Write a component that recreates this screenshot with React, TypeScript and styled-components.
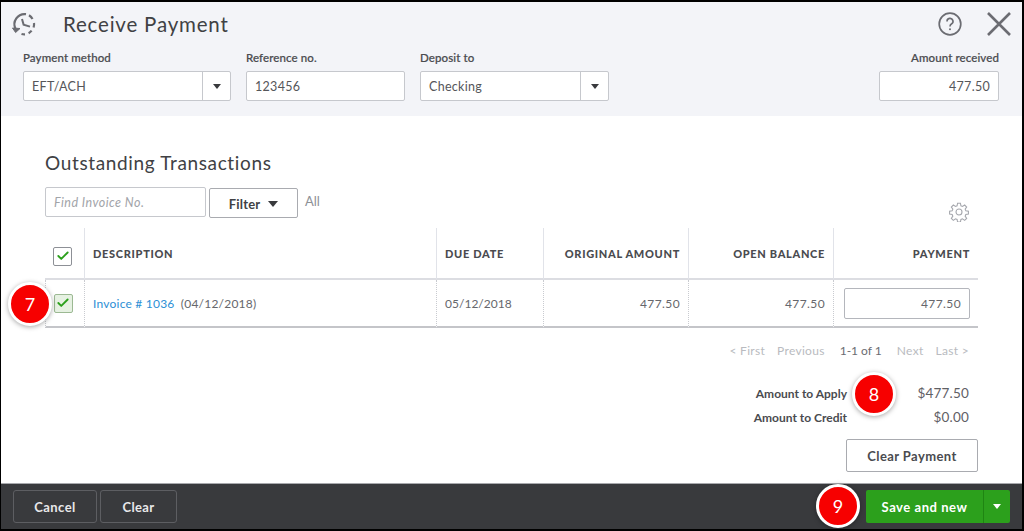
import React from "react"
import styled, { createGlobalStyle } from "styled-components"
import { Check } from "lucide-react"

const GlobalStyle = createGlobalStyle`
  html, body {
    margin: 0;
    padding: 0;
    background: #000;
  }
  * {
    box-sizing: border-box;
  }
`

const Frame = styled.div`
  position: relative;
  width: 1024px;
  height: 531px;
  padding: 2px 2px 2px 1px;
  background: #000;
  font-family: "Lato", "Liberation Sans", sans-serif;
  color: #393a3d;
  display: flex;
  flex-direction: column;
  overflow: hidden;
`

const Header = styled.header`
  height: 114px;
  background: #f3f4f8;
  padding: 8px 11px 0 10px;
  flex: none;
`

const TitleRow = styled.div`
  display: flex;
  align-items: center;
  height: 28px;
`

const Title = styled.h1`
  margin: 0 0 0 26px;
  font-size: 20.5px;
  font-weight: 400;
  letter-spacing: 0.8px;
  color: #404144;
  flex: 1;
`

const IconButton = styled.span<{ $gap: number }>`
  display: flex;
  margin-left: ${(p) => p.$gap}px;
`

const Fields = styled.div`
  display: flex;
  margin: 13px 0 0 12px;
`

const Field = styled.div<{ $width: number; $gap?: number; $right?: boolean }>`
  width: ${(p) => p.$width}px;
  margin-left: ${(p) => (p.$right ? "auto" : "0")};
  margin-right: ${(p) => (p.$right ? "12px" : `${p.$gap ?? 0}px`)};
  text-align: ${(p) => (p.$right ? "right" : "left")};
`

const Label = styled.div`
  font-size: 11.5px;
  line-height: 14px;
  height: 14px;
  color: #4a4b4f;
  margin-bottom: 6px;
  font-weight: 500;
  letter-spacing: 0.1px;
  -webkit-text-stroke: 0.2px #4a4b4f;
`

const InputBox = styled.div<{ $right?: boolean }>`
  height: 30px;
  background: #fff;
  border: 1px solid #c6c8cd;
  border-radius: 2px;
  display: flex;
  align-items: center;
  justify-content: ${(p) => (p.$right ? "flex-end" : "flex-start")};
  font-size: 12.5px;
  letter-spacing: 0.3px;
  color: #55565a;
  padding: 1px 8px 0;
`

const SelectBox = styled(InputBox)`
  padding: 0;
`

const SelectValue = styled.span`
  flex: 1;
  padding: 1px 0 0 8px;
`

const SelectArrow = styled.span`
  width: 28px;
  height: 100%;
  border-left: 1px solid #c6c8cd;
  display: flex;
  align-items: center;
  justify-content: center;
`

const Caret = styled.i<{ $color?: string; $large?: boolean }>`
  display: block;
  width: 0;
  height: 0;
  border-left: ${(p) => (p.$large ? 5.5 : 4.5)}px solid transparent;
  border-right: ${(p) => (p.$large ? 5.5 : 4.5)}px solid transparent;
  border-top: ${(p) => (p.$large ? 6 : 5)}px solid ${(p) => p.$color ?? "#393a3d"};
`

const Body = styled.main`
  flex: 1;
  background: #fff;
  padding: 34px 44px 0 44px;
`

const SectionTitle = styled.h2`
  margin: 0;
  font-size: 19px;
  line-height: 26px;
  font-weight: 400;
  letter-spacing: 0.64px;
  color: #404144;
`

const Toolbar = styled.div`
  display: flex;
  align-items: flex-start;
  margin-top: 11px;
  height: 41px;
`

const FindInput = styled.div`
  width: 161px;
  height: 30px;
  border: 1px solid #c6c8cd;
  border-radius: 2px;
  font-size: 12.5px;
  font-style: italic;
  letter-spacing: 0.45px;
  color: #a2a4a9;
  display: flex;
  align-items: center;
  padding-left: 8px;
`

const FilterButton = styled.div`
  width: 89px;
  height: 30px;
  margin: 1px 0 0 3px;
  border: 1px solid #a9abb0;
  border-radius: 2px;
  display: flex;
  align-items: center;
  justify-content: center;
  gap: 8px;
  padding-top: 1px;
  font-size: 13px;
  font-weight: 700;
  letter-spacing: 0.2px;
  color: #404144;
`

const AllLabel = styled.span`
  margin: 6px 0 0 7px;
  font-size: 13px;
  color: #8d9096;
`

const GearSlot = styled.span`
  margin: 15px 9px 0 auto;
  color: #a6a8ae;
  display: flex;
`

const Grid = styled.div`
  display: grid;
  grid-template-columns: 39px 352px 107px 145px 145px 145px;
  width: 933px;
`

const HeadCell = styled.div<{ $right?: boolean; $center?: boolean }>`
  height: 52px;
  border-left: 1px solid #e1e3e9;
  border-bottom: 2px solid #dcdde2;
  display: flex;
  align-items: center;
  justify-content: ${(p) => (p.$center ? "center" : p.$right ? "flex-end" : "flex-start")};
  padding: 0 8px;
  font-size: 11px;
  font-weight: 900;
  letter-spacing: 0.68px;
  color: #4a4b4f;
  &:first-child {
    border-left: 0;
  }
`

const RowCell = styled.div<{ $right?: boolean; $center?: boolean; $tight?: boolean }>`
  height: 48px;
  border-left: 1px dotted #c9cbd0;
  border-bottom: 2px solid #c4c5c9;
  display: flex;
  align-items: center;
  justify-content: ${(p) => (p.$center ? "center" : p.$right ? "flex-end" : "flex-start")};
  padding: 0 8px;
  font-size: 12px;
  letter-spacing: ${(p) => (p.$tight ? "0.02px" : "0.4px")};
  color: #66676c;
  &:first-child {
    border-left: 0;
  }
`

const CheckBox = styled.span<{ $focus?: boolean }>`
  width: 19px;
  height: 19px;
  border: 1px solid ${(p) => (p.$focus ? "#9cb993" : "#8d9096")};
  border-radius: 2px;
  background: ${(p) => (p.$focus ? "#e6f1e2" : "#fff")};
  display: flex;
  align-items: center;
  justify-content: center;
  color: #2ca01c;
  margin: ${(p) => (p.$focus ? "0" : "6px")} 0 0 -4px;
`

const InvoiceText = styled.span`
  letter-spacing: 0.22px;
`

const InvoiceLink = styled.span`
  color: #2d8fd5;
  margin-right: 3px;
`

const PaymentInput = styled.div`
  width: 126px;
  height: 31px;
  margin-top: 1px;
  border: 1px solid #b4b6bc;
  border-radius: 2px;
  display: flex;
  align-items: center;
  justify-content: flex-end;
  padding-right: 8px;
`

const Pager = styled.div`
  display: flex;
  justify-content: flex-end;
  gap: 12px;
  margin: 15px 9px 0 0;
  font-size: 12px;
  line-height: 16px;
  letter-spacing: 0.3px;
  color: #b9bbc0;
`

const PagerCount = styled.span`
  color: #6b6c72;
  margin: 0 3px;
  letter-spacing: 0;
`

const Totals = styled.div`
  display: grid;
  grid-template-columns: 102px 121px;
  grid-auto-rows: 24px;
  justify-content: end;
  margin: 22px 9px 0 0;
  align-items: center;
`

const TotalLabel = styled.span`
  font-size: 12px;
  font-weight: 700;
  text-align: right;
  white-space: nowrap;
  color: #4a4b4f;
  margin-right: 1px;
`

const TotalValue = styled.span`
  font-size: 13.5px;
  letter-spacing: 0.2px;
  text-align: right;
  color: #5f6065;
`

const ClearRow = styled.div`
  display: flex;
  justify-content: flex-end;
  margin-top: 10px;
`

const OutlineButton = styled.div`
  width: 132px;
  height: 33px;
  border: 1px solid #a9abb0;
  border-radius: 2px;
  display: flex;
  align-items: center;
  justify-content: center;
  font-size: 13px;
  font-weight: 700;
  letter-spacing: 0.4px;
  color: #4a4b4f;
`

const Footer = styled.footer`
  height: 46px;
  flex: none;
  background: #393a3d;
  border-top: 1px solid #a8a9ad;
  display: flex;
  align-items: center;
  padding: 0 12px 0 12px;
  gap: 3px;
`

const DarkButton = styled.div<{ $width: number }>`
  width: ${(p) => p.$width}px;
  height: 33px;
  border: 1px solid #5d5e62;
  border-radius: 3px;
  display: flex;
  align-items: center;
  justify-content: center;
  font-size: 13px;
  font-weight: 700;
  letter-spacing: 0.4px;
  color: #e8e8ea;
`

const SaveGroup = styled.div`
  margin-left: auto;
  display: flex;
  height: 33px;
  width: 144px;
  background: #2ca01c;
  border-radius: 2px;
  color: #fff;
`

const SaveLabel = styled.div`
  width: 117px;
  display: flex;
  align-items: center;
  justify-content: center;
  font-size: 13px;
  font-weight: 700;
  letter-spacing: 0.55px;
`

const SaveArrow = styled.div`
  flex: 1;
  border-left: 1px solid #1f8512;
  display: flex;
  align-items: center;
  justify-content: center;
`

const Badge = styled.div<{ $x: number; $y: number }>`
  position: absolute;
  left: ${(p) => p.$x - 22}px;
  top: ${(p) => p.$y - 22}px;
  width: 44px;
  height: 44px;
  border-radius: 50%;
  background: #f70000;
  border: 3px solid #fff;
  box-shadow: 0 1px 5px rgba(0, 0, 0, 0.35);
  color: #fff;
  font-size: 18px;
  display: flex;
  align-items: center;
  justify-content: center;
`

function HistoryIcon() {
  return (
    <svg width="26" height="26" viewBox="0 0 26 26" fill="none" stroke="#6b6c72" strokeWidth="2.2">
      <path d="M4.6 18 A10.2 10.2 0 0 1 15 3.2" />
      <path d="M18 4.2 A10.2 10.2 0 0 1 21.5 8" />
      <path d="M23 12 A10.2 10.2 0 0 1 22.6 16.5" />
      <path d="M20.6 19.6 A10.2 10.2 0 0 1 17.6 22.2" />
      <path d="M14 23.4 A10.2 10.2 0 0 1 10.5 23" />
      <path d="M11 8 L12.6 13.6 L19 15.6" strokeWidth="2" />
      <path d="M1.5 17 L4.6 21.5 L9 17.5 Z" fill="#6b6c72" strokeWidth="1" />
    </svg>
  )
}

function HelpIcon() {
  return (
    <svg width="24" height="24" viewBox="0 0 24 24" fill="none" stroke="#6b6c72" strokeWidth="1.7">
      <circle cx="12" cy="12" r="10.8" />
      <path d="M9 9.4 A3 3 0 1 1 13.4 12 C12.4 12.6 12 13.2 12 14.4" strokeWidth="1.6" />
      <circle cx="12" cy="17.2" r="1" fill="#6b6c72" stroke="none" />
    </svg>
  )
}

function CloseIcon() {
  return (
    <svg width="24" height="24" viewBox="0 0 24 24" fill="none" stroke="#6b6c72" strokeWidth="2.6">
      <path d="M1 1 L23 23 M23 1 L1 23" />
    </svg>
  )
}

function GearIcon() {
  return (
    <svg width="20" height="20" viewBox="0 0 24 24" fill="none" stroke="currentColor" strokeWidth="1.3">
      <circle cx="12" cy="12" r="3.6" />
      <path d="M10.3 1.5h3.4l.6 3.1 1.9.8 2.6-1.8 2.4 2.4-1.8 2.6.8 1.9 3.1.6v3.4l-3.1.6-.8 1.9 1.8 2.6-2.4 2.4-2.6-1.8-1.9.8-.6 3.1h-3.4l-.6-3.1-1.9-.8-2.6 1.8-2.4-2.4 1.8-2.6-.8-1.9-3.1-.6v-3.4l3.1-.6.8-1.9-1.8-2.6 2.4-2.4 2.6 1.8 1.9-.8z" />
    </svg>
  )
}

export default function App() {
  return (
    <Frame>
      <GlobalStyle />
      <Header>
        <TitleRow>
          <HistoryIcon />
          <Title>Receive Payment</Title>
          <IconButton $gap={0}>
            <HelpIcon />
          </IconButton>
          <IconButton $gap={25}>
            <CloseIcon />
          </IconButton>
        </TitleRow>
        <Fields>
          <Field $width={208} $gap={15}>
            <Label>Payment method</Label>
            <SelectBox>
              <SelectValue>EFT/ACH</SelectValue>
              <SelectArrow>
                <Caret />
              </SelectArrow>
            </SelectBox>
          </Field>
          <Field $width={159} $gap={15}>
            <Label>Reference no.</Label>
            <InputBox>123456</InputBox>
          </Field>
          <Field $width={189}>
            <Label>Deposit to</Label>
            <SelectBox>
              <SelectValue>Checking</SelectValue>
              <SelectArrow>
                <Caret />
              </SelectArrow>
            </SelectBox>
          </Field>
          <Field $width={120} $right>
            <Label>Amount received</Label>
            <InputBox $right>477.50</InputBox>
          </Field>
        </Fields>
      </Header>
      <Body>
        <SectionTitle>Outstanding Transactions</SectionTitle>
        <Toolbar>
          <FindInput>Find Invoice No.</FindInput>
          <FilterButton>
            Filter
            <Caret $large />
          </FilterButton>
          <AllLabel>All</AllLabel>
          <GearSlot>
            <GearIcon />
          </GearSlot>
        </Toolbar>
        <Grid>
          <HeadCell $center>
            <CheckBox>
              <Check size={14} strokeWidth={3.2} />
            </CheckBox>
          </HeadCell>
          <HeadCell>DESCRIPTION</HeadCell>
          <HeadCell>DUE DATE</HeadCell>
          <HeadCell $right>ORIGINAL AMOUNT</HeadCell>
          <HeadCell $right>OPEN BALANCE</HeadCell>
          <HeadCell $right>PAYMENT</HeadCell>
          <RowCell $center>
            <CheckBox $focus>
              <Check size={14} strokeWidth={3.2} />
            </CheckBox>
          </RowCell>
          <RowCell>
            <InvoiceText>
              <InvoiceLink>Invoice # 1036</InvoiceLink> (04/12/2018)
            </InvoiceText>
          </RowCell>
          <RowCell $tight>05/12/2018</RowCell>
          <RowCell $right>477.50</RowCell>
          <RowCell $right>477.50</RowCell>
          <RowCell $right>
            <PaymentInput>477.50</PaymentInput>
          </RowCell>
        </Grid>
        <Pager>
          <span>&lt; First</span>
          <span>Previous</span>
          <PagerCount>1-1 of 1</PagerCount>
          <span>Next</span>
          <span>Last &gt;</span>
        </Pager>
        <Totals>
          <TotalLabel>Amount to Apply</TotalLabel>
          <TotalValue>$477.50</TotalValue>
          <TotalLabel>Amount to Credit</TotalLabel>
          <TotalValue>$0.00</TotalValue>
        </Totals>
        <ClearRow>
          <OutlineButton>Clear Payment</OutlineButton>
        </ClearRow>
      </Body>
      <Footer>
        <DarkButton $width={84}>Cancel</DarkButton>
        <DarkButton $width={77}>Clear</DarkButton>
        <SaveGroup>
          <SaveLabel>Save and new</SaveLabel>
          <SaveArrow>
            <Caret $color="#fff" />
          </SaveArrow>
        </SaveGroup>
      </Footer>
      <Badge $x={30} $y={304}>7</Badge>
      <Badge $x={874} $y={394}>8</Badge>
      <Badge $x={838} $y={506}>9</Badge>
    </Frame>
  )
}
